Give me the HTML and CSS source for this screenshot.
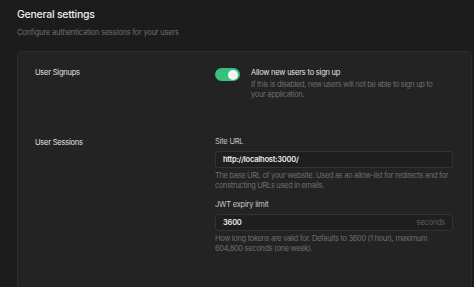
FILE: index.html
```html
<!DOCTYPE html>
<html>
<head>
<meta charset="utf-8">
<link rel="stylesheet" href="styles.css">
</head>
<body>
<div class="page">
  <h1 class="title">General settings</h1>
  <p class="subtitle">Configure authentication sessions for your users</p>
  <div class="card">
    <div class="row row-signups">
      <div class="label">User Signups</div>
      <div class="content">
        <div class="toggle-line">
          <span class="toggle"><span class="knob"></span></span>
          <div class="toggle-text">
            <div class="toggle-title">Allow new users to sign up</div>
            <div class="desc">If this is disabled, new users will not be able to sign up to your application.</div>
          </div>
        </div>
      </div>
    </div>
    <div class="row row-sessions">
      <div class="label">User Sessions</div>
      <div class="content">
        <div class="field">
          <div class="field-label">Site URL</div>
          <div class="input"><span class="value">http://localhost:3000/</span></div>
          <div class="desc">The base URL of your website. Used as an allow-list for redirects and for constructing URLs used in emails.</div>
        </div>
        <div class="field">
          <div class="field-label">JWT expiry limit</div>
          <div class="input"><span class="value">3600</span><span class="suffix">seconds</span></div>
          <div class="desc">How long tokens are valid for. Defaults to 3600 (1 hour), maximum 604,800 seconds (one week).</div>
        </div>
      </div>
    </div>
  </div>
</div>
</body>
</html>
```

FILE: styles.css
```css
* { box-sizing: border-box; }
html, body { margin: 0; padding: 0; }
body {
  background: #1c1c1c;
  font-family: Inter, "Noto Sans", sans-serif;
  color: #ededed;
  overflow: hidden;
  height: 287px;
  letter-spacing: -0.22px;
}
.page {
  padding: 8px 0 0 17px;
}
.title {
  margin: 0;
  font-size: 10.5px;
  font-weight: 500;
  line-height: 14px;
  color: #ededed;
  letter-spacing: -0.25px;
}
.subtitle {
  margin: 6px 0 0;
  font-size: 7.5px;
  line-height: 10px;
  color: #6f6f6f;
}
.card {
  margin-top: 13px;
  width: 455px;
  height: 250px;
  background: #232323;
  border: 1px solid #2c2c2c;
  border-radius: 5px;
  padding: 15px 18px 0 17px;
}
.row {
  display: flex;
}
.row-signups { height: 70px; }
.label {
  width: 180px;
  flex: none;
  font-size: 7.5px;
  line-height: 10px;
  color: #e4e4e4;
  padding-top: 1px;
}
.content { width: 238px; }
.toggle-line { display: flex; gap: 11px; }
.toggle {
  width: 25px;
  height: 13px;
  border-radius: 7px;
  background: #3bbf7f;
  position: relative;
  flex: none;
  margin-top: 1px;
}
.knob {
  position: absolute;
  right: 2px;
  top: 1.5px;
  width: 10px;
  height: 10px;
  border-radius: 50%;
  background: #f4f4f4;
}
.toggle-text { width: 194px; }
.toggle-title {
  font-size: 7.5px;
  line-height: 10px;
  color: #e4e4e4;
  margin-top: 1px;
  margin-bottom: 2px;
}
.desc {
  font-size: 7.5px;
  line-height: 10px;
  color: #6f6f6f;
  letter-spacing: -0.33px;
}
.field-label {
  font-size: 7.5px;
  line-height: 10px;
  color: #c8c8c8;
}
.field + .field { margin-top: 9px; }
.input {
  margin: 4px 0 3px;
  height: 17px;
  border: 1px solid #333;
  background: #1f1f1f;
  border-radius: 3px;
  display: flex;
  align-items: center;
  justify-content: space-between;
  padding: 0 7px;
}
.value {
  font-size: 7.5px;
  font-weight: 600;
  color: #ececec;
}
.suffix {
  font-size: 7.5px;
  color: #5e5e5e;
}
```
